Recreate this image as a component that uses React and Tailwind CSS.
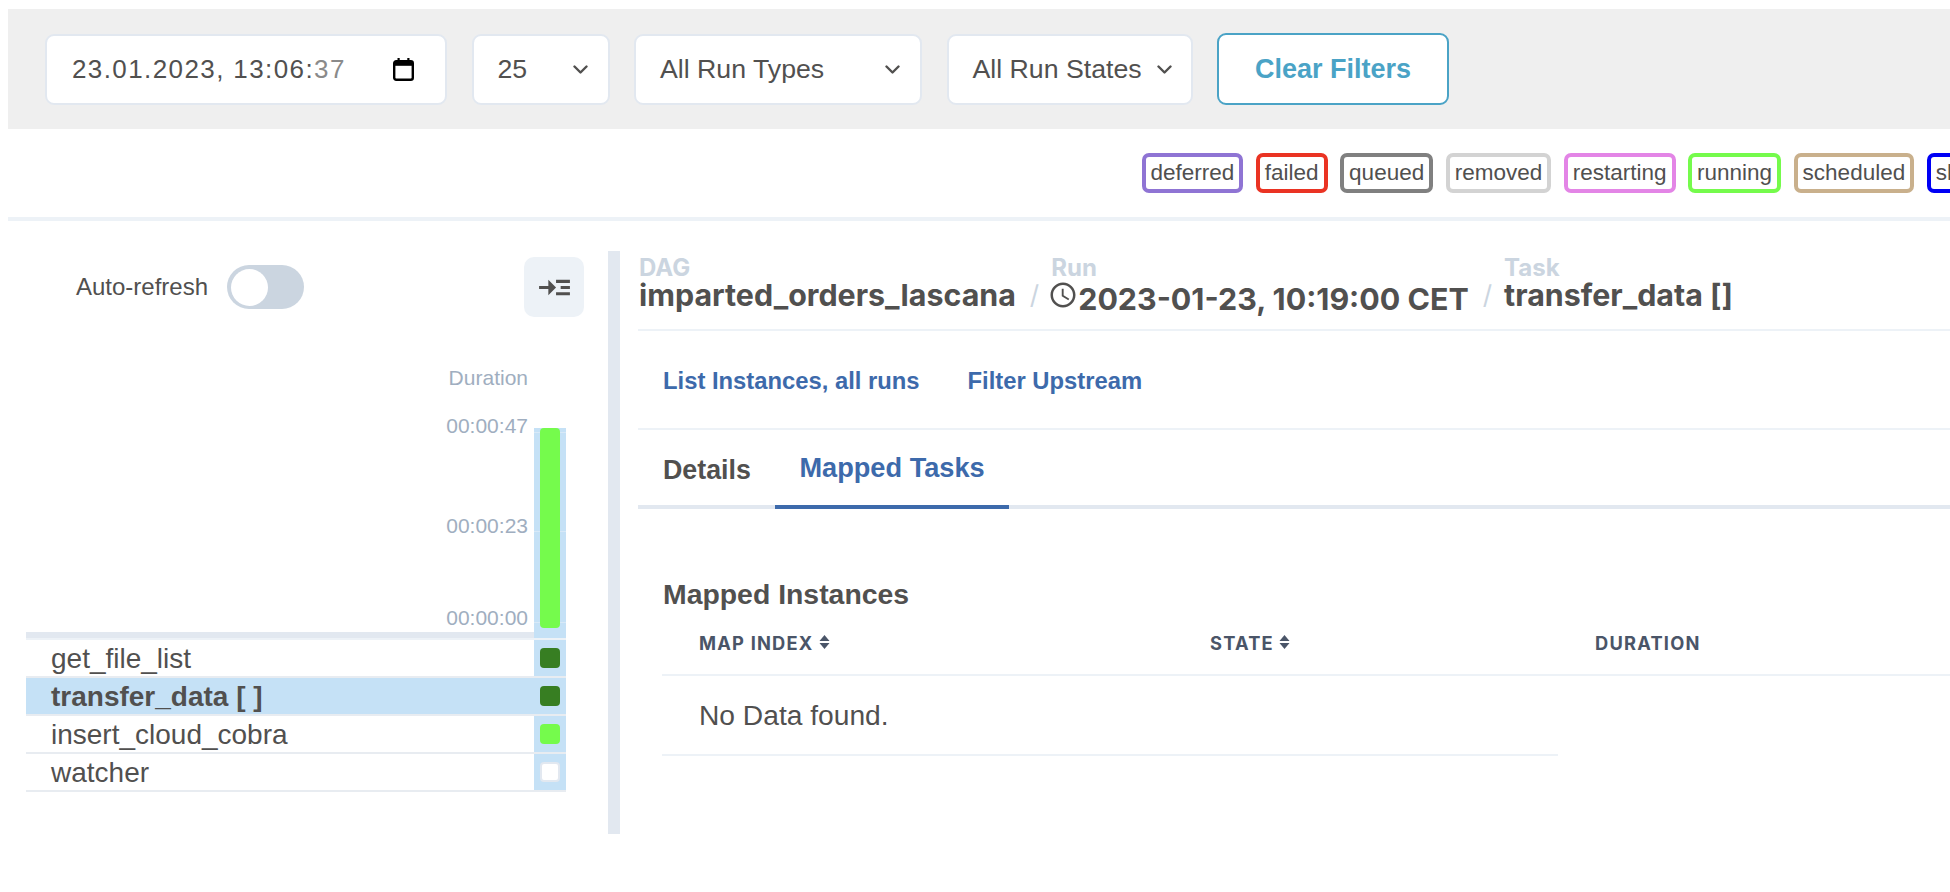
import React from "react";
import { MdReadMore, MdOutlineAccessTime } from "react-icons/md";

const Chevron = () => (
  <svg width="15" height="9" viewBox="0 0 15 9" fill="none" stroke="#51504f" strokeWidth="2.4" strokeLinecap="round" strokeLinejoin="round">
    <path d="M1.5 1.5 7.5 7.5 13.5 1.5" />
  </svg>
);

const Calendar = () => (
  <svg width="21" height="23" viewBox="0 0 21 23" fill="none">
    <rect x="1.2" y="3.2" width="18.6" height="18.6" rx="2" stroke="#000" strokeWidth="2.4" />
    <rect x="1.2" y="3.2" width="18.6" height="4.6" fill="#000" />
    <rect x="4.5" y="0" width="2.2" height="4" fill="#000" />
    <rect x="14.3" y="0" width="2.2" height="4" fill="#000" />
  </svg>
);

const SortIcon = () => (
  <svg width="11" height="14" viewBox="0 0 11 14" fill="#4a5568" className="ml-[5px] mb-[3px] shrink-0">
    <path d="M5.5 0 10.5 6H.5z" />
    <path d="M.5 8h10l-5 6z" />
  </svg>
);

function Select({ label, className }) {
  return (
    <div className={`flex h-[71px] items-center justify-between rounded-[9px] border-2 border-[#e2e8f0] bg-white ${className}`}>
      <span className="text-[26.7px] text-[#51504f]">{label}</span>
      <Chevron />
    </div>
  );
}

const chips = [
  ["deferred", "border-[#8f74d4]"],
  ["failed", "border-[#ea3323]"],
  ["queued", "border-[#808080]"],
  ["removed", "border-[#d3d3d3]"],
  ["restarting", "border-[#e385e6]"],
  ["running", "border-[#75fb4c]"],
  ["scheduled", "border-[#c9b08c]"],
  ["shutdown", "border-[#0000f5]"],
];

function TaskRow({ name, selected, square }) {
  return (
    <div className={`flex h-[38px] border-b-2 border-[#e8ecf1] ${selected ? "bg-[#c5e1f6]" : ""}`}>
      <div className={`flex-1 pl-[25px] text-[28px] leading-[38px] text-[#51504f] ${selected ? "font-bold" : ""}`}>{name}</div>
      <div className="flex w-8 items-center justify-center bg-[#c5e1f6]">
        <div className={`h-5 w-5 rounded-[4px] ${square}`} />
      </div>
    </div>
  );
}

function Crumb({ label, value, icon }) {
  return (
    <div className="flex flex-col">
      <span className="text-[24px] font-bold leading-[24px] text-[#cbd5e0]">{label}</span>
      <span className="flex items-center whitespace-nowrap text-[30.4px] font-bold leading-[30px] text-[#51504f]">
        {icon}
        {value}
      </span>
    </div>
  );
}

const Slash = () => <span className="ml-[14px] mr-[12px] mt-6 text-[26px] leading-[30px] text-[#cbd5e0]">/</span>;

export default function App() {
  return (
    <div className="h-[892px] w-[1950px] overflow-hidden bg-white pt-[9px] font-['Liberation_Sans',Arial,sans-serif] text-[#51504f]">
      {/* filter bar */}
      <div className="ml-2 flex h-[120px] items-center gap-[24.5px] bg-[#efefef] pl-[37px]">
        <div className="flex h-[71px] w-[402px] items-center justify-between rounded-[9px] border-2 border-[#e2e8f0] bg-white pl-[25px] pr-[31px]">
          <span className="whitespace-nowrap text-[26px] tracking-[1.4px]">
            23.01.2023, 13:06:<span className="text-[#8a8a8a]">37</span>
          </span>
          <Calendar />
        </div>
        <Select label="25" className="w-[138px] pl-6 pr-[20px]" />
        <Select label="All Run Types" className="w-[288px] pl-6 pr-[20px]" />
        <Select label="All Run States" className="w-[246px] pl-6 pr-[19px]" />
        <button className="h-[72px] w-[232px] rounded-[9px] border-2 border-[#4aa3c6] bg-white pt-px text-[27px] font-bold text-[#4aa3c6]">
          Clear Filters
        </button>
      </div>

      {/* legend */}
      <div className="flex h-[88px] items-center gap-[12.5px] overflow-hidden whitespace-nowrap pl-[1141.5px]">
        {chips.map(([name, color]) => (
          <div key={name} className={`flex h-10 shrink-0 items-center rounded-[7px] border-4 bg-white px-[5px] text-[22.5px] ${color}`}>
            {name}
          </div>
        ))}
      </div>

      <div className="ml-2 h-1 bg-[#edf2f7]" />

      {/* main */}
      <div className="flex pl-[26px] pt-[30px]">
        {/* grid panel */}
        <div className="w-[558px] pt-[6px]">
          <div className="flex h-[60px] items-center justify-between pl-[50px]">
            <div className="flex items-center gap-[19px]">
              <span className="text-[24px]">Auto-refresh</span>
              <div className="flex h-[44px] w-[77px] items-center rounded-full bg-[#cbd5e0] pl-[4px]">
                <div className="h-[37px] w-[37px] rounded-full bg-white" />
              </div>
            </div>
            <div className="flex h-[60px] w-[60px] items-center justify-center rounded-[10px] bg-[#edf2f7]">
              <MdReadMore size={37} color="#51504f" />
            </div>
          </div>

          <div className="mt-[49px] w-[540px] pr-[38px] text-right text-[21px] leading-[24px] text-[#a0aec0]">Duration</div>

          <div className="mt-6 w-[540px]">
            <div className="flex border-b-2 border-[#edf2f7]">
              <div className="flex h-[224px] flex-1 flex-col items-end justify-between border-b-[6px] border-[#e2e8f0] pr-[6px]">
                <div className="flex flex-col items-end text-[21px] leading-[24px] text-[#a0aec0]">
                  <span>00:00:47</span>
                  <span className="mt-[76px]">00:00:23</span>
                  <span className="mt-[68px]">00:00:00</span>
                </div>
              </div>
              <div className="w-8">
                <div className="h-[14px]" />
                <div className="relative h-[210px] bg-[#c5e1f6]">
                  <div className="absolute inset-x-0 top-[4px] h-px bg-[#d8e9f7]" />
                  <div className="absolute inset-x-0 top-[103px] h-px bg-[#d8e9f7]" />
                  <div className="absolute inset-x-0 top-[194px] h-px bg-[#d8e9f7]" />
                  <div className="absolute left-[6px] top-0 h-[200px] w-5 rounded-[4px] bg-[#75fb4c]" />
                </div>
              </div>
            </div>
            <TaskRow name="get_file_list" square="bg-[#377e22]" />
            <TaskRow name="transfer_data [ ]" selected square="bg-[#377e22]" />
            <TaskRow name="insert_cloud_cobra" square="bg-[#75fb4c]" />
            <TaskRow name="watcher" square="bg-white border-2 border-[#e2e8f0]" />
          </div>
        </div>

        <div className="ml-6 h-[583px] w-3 shrink-0 bg-[#e2e8f0]" />

        {/* details panel */}
        <div className="min-w-0 flex-1 pl-[18px]">
          <div className="flex h-[80px] items-start border-b-2 border-[#edf2f7] pl-px pt-[5px] font-['Inter',sans-serif]">
            <Crumb label="DAG" value="imparted_orders_lascana" />
            <Slash />
            <Crumb
              label="Run"
              value="2023-01-23, 10:19:00 CET"
              icon={<MdOutlineAccessTime size={30} color="#51504f" className="-ml-[3px] mb-[8px] shrink-0" />}
            />
            <Slash />
            <Crumb label="Task" value="transfer_data []" />
          </div>

          <div className="flex h-[99px] items-center gap-[48px] border-b-2 border-[#edf2f7] pl-[25px] pt-[3px] text-[23.8px] font-bold text-[#3d6aab]">
            <span>List Instances, all runs</span>
            <span>Filter Upstream</span>
          </div>

          <div className="flex h-[79px] border-b-4 border-[#e2e8f0]">
            <div className="flex h-[79px] items-center pl-[25px] pr-[24px] pt-px text-[26.8px] font-bold">Details</div>
            <div className="flex h-[79px] items-center border-b-4 border-[#3d6aab] px-[24.5px] pt-[2px] text-[27.2px] font-bold text-[#3d6aab]">
              Mapped Tasks
            </div>
          </div>

          <h3 className="ml-[25px] mt-[68px] text-[28.4px] font-bold leading-[34px]">Mapped Instances</h3>

          <table className="ml-6 mt-px w-[calc(100%-24px)] table-fixed border-separate border-spacing-0 font-['Inter',sans-serif] text-left">
            <colgroup>
              <col className="w-[511px]" />
              <col className="w-[385px]" />
              <col />
            </colgroup>
            <thead>
              <tr>
                {[["Map Index", true], ["State", true], ["Duration", false]].map(([t, sort]) => (
                  <th key={t} className="h-[64px] border-b-2 border-[#edf2f7] pl-[37px] align-middle">
                    <span className="flex items-center whitespace-nowrap text-[18.3px] font-bold uppercase leading-[24px] tracking-[1.2px] text-[#4a5568]">
                      {t}
                      {sort && <SortIcon />}
                    </span>
                  </th>
                ))}
              </tr>
            </thead>
            <tbody>
              <tr>
                <td colSpan={2} className="h-[80px] border-b-2 border-[#edf2f7] pl-[37px] font-['Liberation_Sans',Arial,sans-serif] text-[28.2px] text-[#51504f]">
                  No Data found.
                </td>
                <td />
              </tr>
            </tbody>
          </table>
        </div>
      </div>
    </div>
  );
}
